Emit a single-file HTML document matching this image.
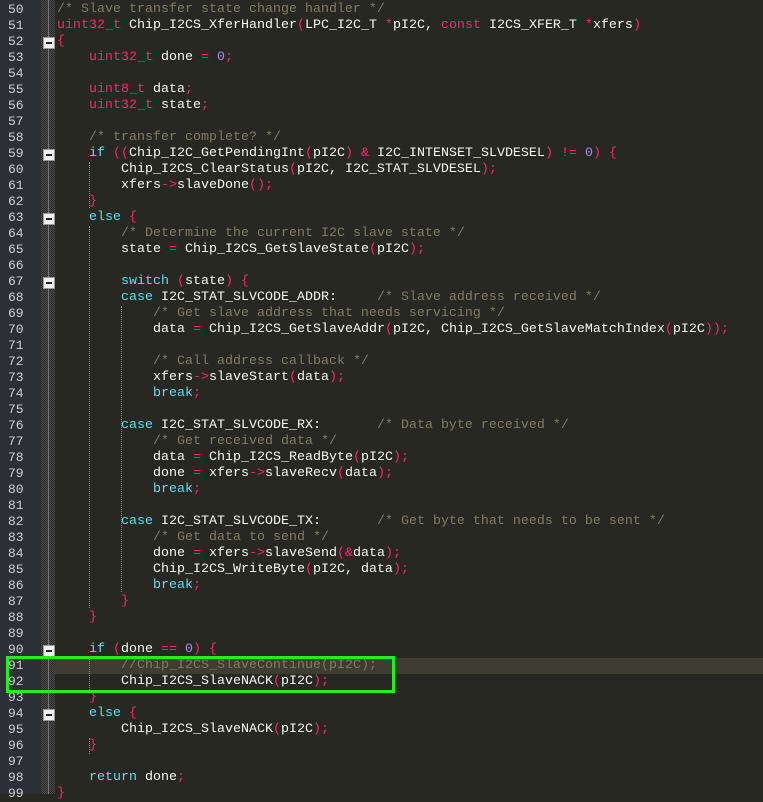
<!DOCTYPE html>
<html><head><meta charset="utf-8"><style>
html,body{margin:0;padding:0;}
body{width:763px;height:794px;overflow:hidden;background:#272822;position:relative;font-family:"Liberation Mono",monospace;font-size:13.33px;}
#gut{position:absolute;left:0;top:0;width:41px;height:794px;background:#2c2f34;}
#fold{position:absolute;left:41px;top:0;width:14px;height:794px;background-color:#3a3a3a;
background-image:repeating-conic-gradient(#2a2a2a 0 25%,#4a4a4a 0 50%);background-size:2px 2px;}
#foldline{position:absolute;left:48px;top:0;width:1px;height:794px;background:#777;}
.num{position:absolute;left:8px;color:#cfcfcf;height:16px;line-height:16px;font-size:13px;}
.box{position:absolute;left:43px;width:10px;height:10px;background:#f0f0f0;border:1px solid #999;box-sizing:content-box;}
.box:after{content:"";position:absolute;left:2px;right:2px;top:4px;height:2px;background:#222;}
.ln{position:absolute;left:57px;height:16px;line-height:16px;white-space:pre;color:#f8f8f2;}
.c{color:#807c66}.t{color:#f92672}.o{color:#f92672}.k{color:#66d9ef}.n{color:#ae81ff}
.g{position:absolute;width:0;border-left:1px dotted #8a8a8a;}
#hl{position:absolute;left:55px;top:658px;width:708px;height:16px;background:#3e3d32;}
#grn{position:absolute;left:6px;top:656px;width:383px;height:31px;border:3px solid #22ee22;}
</style></head><body>
<div id="gut"></div><div id="fold"></div><div id="foldline"></div>
<div id="hl"></div>
<div class="g" style="left:89px;top:162px;height:46px"></div>
<div class="g" style="left:89px;top:226px;height:382px"></div>
<div class="g" style="left:121px;top:306px;height:286px"></div>
<div class="g" style="left:89px;top:658px;height:32px"></div>
<div class="g" style="left:89px;top:738px;height:16px"></div>
<div id="lines"></div>
<script>
(function(){
var L=[
'<span class="c">/* Slave transfer state change handler */</span>',
'<span class="t">uint32_t</span> Chip_I2CS_XferHandler<span class="o">(</span>LPC_I2C_T <span class="o">*</span>pI2C, <span class="t">const</span> I2CS_XFER_T <span class="o">*</span>xfers<span class="o">)</span>',
'<span class="o">{</span>',
'    <span class="t">uint32_t</span> done <span class="o">=</span> <span class="n">0</span><span class="o">;</span>',
'',
'    <span class="t">uint8_t</span> data<span class="o">;</span>',
'    <span class="t">uint32_t</span> state<span class="o">;</span>',
'',
'    <span class="c">/* transfer complete? */</span>',
'    <span class="k">if</span> <span class="o">((</span>Chip_I2C_GetPendingInt<span class="o">(</span>pI2C<span class="o">)</span> <span class="o">&amp;</span> I2C_INTENSET_SLVDESEL<span class="o">)</span> <span class="o">!=</span> <span class="n">0</span><span class="o">)</span> <span class="o">{</span>',
'        Chip_I2CS_ClearStatus<span class="o">(</span>pI2C, I2C_STAT_SLVDESEL<span class="o">);</span>',
'        xfers<span class="o">-&gt;</span>slaveDone<span class="o">();</span>',
'    <span class="o">}</span>',
'    <span class="k">else</span> <span class="o">{</span>',
'        <span class="c">/* Determine the current I2C slave state */</span>',
'        state <span class="o">=</span> Chip_I2CS_GetSlaveState<span class="o">(</span>pI2C<span class="o">);</span>',
'',
'        <span class="k">switch</span> <span class="o">(</span>state<span class="o">)</span> <span class="o">{</span>',
'        <span class="k">case</span> I2C_STAT_SLVCODE_ADDR:     <span class="c">/* Slave address received */</span>',
'            <span class="c">/* Get slave address that needs servicing */</span>',
'            data <span class="o">=</span> Chip_I2CS_GetSlaveAddr<span class="o">(</span>pI2C, Chip_I2CS_GetSlaveMatchIndex<span class="o">(</span>pI2C<span class="o">));</span>',
'',
'            <span class="c">/* Call address callback */</span>',
'            xfers<span class="o">-&gt;</span>slaveStart<span class="o">(</span>data<span class="o">);</span>',
'            <span class="k">break</span><span class="o">;</span>',
'',
'        <span class="k">case</span> I2C_STAT_SLVCODE_RX:       <span class="c">/* Data byte received */</span>',
'            <span class="c">/* Get received data */</span>',
'            data <span class="o">=</span> Chip_I2CS_ReadByte<span class="o">(</span>pI2C<span class="o">);</span>',
'            done <span class="o">=</span> xfers<span class="o">-&gt;</span>slaveRecv<span class="o">(</span>data<span class="o">);</span>',
'            <span class="k">break</span><span class="o">;</span>',
'',
'        <span class="k">case</span> I2C_STAT_SLVCODE_TX:       <span class="c">/* Get byte that needs to be sent */</span>',
'            <span class="c">/* Get data to send */</span>',
'            done <span class="o">=</span> xfers<span class="o">-&gt;</span>slaveSend<span class="o">(&amp;</span>data<span class="o">);</span>',
'            Chip_I2CS_WriteByte<span class="o">(</span>pI2C, data<span class="o">);</span>',
'            <span class="k">break</span><span class="o">;</span>',
'        <span class="o">}</span>',
'    <span class="o">}</span>',
'',
'    <span class="k">if</span> <span class="o">(</span>done <span class="o">==</span> <span class="n">0</span><span class="o">)</span> <span class="o">{</span>',
'        <span class="c">//Chip_I2CS_SlaveContinue(pI2C);</span>',
'        Chip_I2CS_SlaveNACK<span class="o">(</span>pI2C<span class="o">);</span>',
'    <span class="o">}</span>',
'    <span class="k">else</span> <span class="o">{</span>',
'        Chip_I2CS_SlaveNACK<span class="o">(</span>pI2C<span class="o">);</span>',
'    <span class="o">}</span>',
'',
'    <span class="k">return</span> done<span class="o">;</span>',
'<span class="o">}</span>'
];
var boxes=[52,59,63,67,90,94];
var h='';
for(var i=0;i<L.length;i++){var n=50+i,y=2+i*16;
h+='<div class="num" style="top:'+y+'px">'+n+'</div>';
h+='<div class="ln" style="top:'+y+'px">'+L[i]+'</div>';
if(boxes.indexOf(n)>=0)h+='<div class="box" style="top:'+(y+3)+'px"></div>';}
document.getElementById('lines').innerHTML=h;
})();
</script>
<div id="grn"></div>
</body></html>
